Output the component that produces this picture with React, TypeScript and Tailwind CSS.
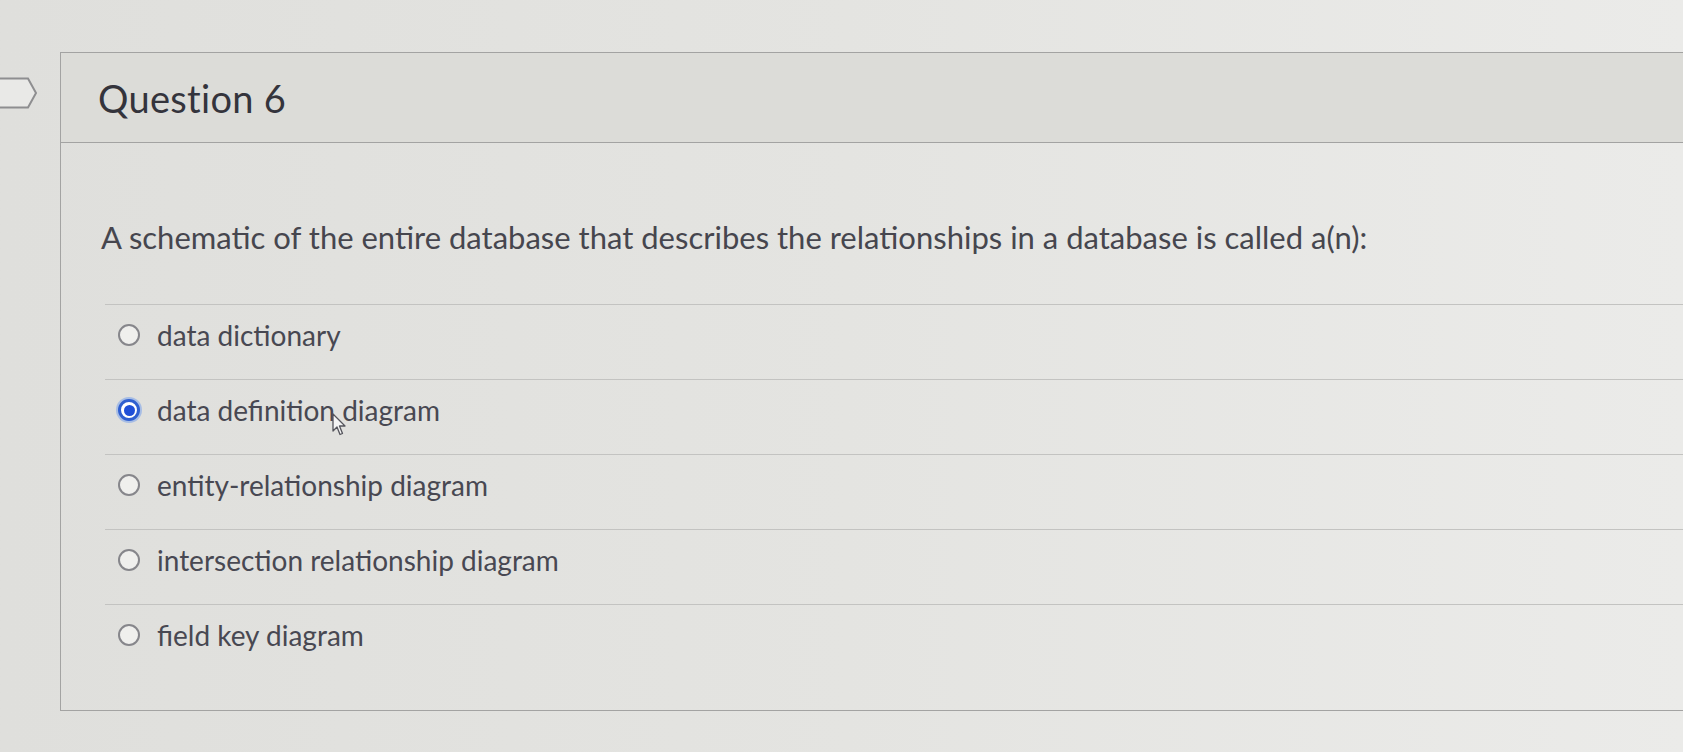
const options = [
  { id: 'a', label: 'data dictionary' },
  { id: 'b', label: 'data definition diagram', checked: true },
  { id: 'c', label: 'entity-relationship diagram' },
  { id: 'd', label: 'intersection relationship diagram' },
  { id: 'e', label: 'ﬁeld key diagram' },
];

function Radio({ checked }: { checked?: boolean }) {
  if (checked) {
    return (
      <span className="w-[22px] h-[22px] shrink-0 rounded-full border-[3px] border-[#2f5fd0] bg-white flex items-center justify-center shadow-[0_0_0_2px_rgba(120,160,235,0.55)]">
        <span className="w-[11px] h-[11px] rounded-full bg-[#1f4fd8]" />
      </span>
    );
  }
  return <span className="w-[22px] h-[22px] shrink-0 rounded-full border-2 border-[#86868b] bg-[#efefed]" />;
}

function Cursor() {
  return (
    <svg className="absolute left-[227px] top-[33px]" width="16" height="24" viewBox="0 0 16 24">
      <path
        d="M1 1 L1 18 L5 14 L8 21.5 L10.5 20.5 L7.5 13 L13 13 Z"
        fill="#f4f4f4"
        stroke="#55555c"
        strokeWidth="1.3"
        strokeLinejoin="round"
      />
    </svg>
  );
}

export default function App() {
  return (
    <div
      className="w-[1683px] h-[752px] overflow-hidden bg-gradient-to-r from-[#dfdfdc] via-[#e4e4e1] to-[#ebebe9] flex pt-[52px]"
      style={{ fontFamily: 'Lato, "Open Sans", sans-serif' }}
    >
      <div className="w-[60px] shrink-0">
        <svg className="mt-[25px]" width="40" height="32" viewBox="0 0 40 32">
          <path d="M-2 1.5 L28 1.5 L36 16 L28 30.5 L-2 30.5 Z" fill="#e9e9e7" stroke="#8e8e90" strokeWidth="2" />
        </svg>
      </div>

      <div className="w-[1700px] shrink-0 self-start border border-r-0 border-[#a3a3a2]">
        <div className="h-[90px] bg-[#dcdcd8] border-b border-[#a3a3a2] flex items-center pl-[37px]">
          <h2 className="text-[38px] leading-none text-[#34343c] tracking-[0.3px]">Question 6</h2>
        </div>

        <div className="pt-[76px] pb-[31px]">
          <p className="pl-[40px] text-[31px] leading-[36px] text-[#46464e]">
            A schematic of the entire database that describes the relationships in a database is called a(n):
          </p>

          <div className="mt-[49px] ml-[44px]">
            {options.map((o) => (
              <label
                key={o.id}
                className="relative flex items-start gap-[17px] h-[75px] pt-[15px] pl-[13px] border-t border-[#c3c3c1] text-[28px] leading-[30px] text-[#484852]"
              >
                <span className="h-[30px] flex items-center">
                  <Radio checked={o.checked} />
                </span>
                <span>{o.label}</span>
                {o.checked && <Cursor />}
              </label>
            ))}
          </div>
        </div>
      </div>
    </div>
  );
}
